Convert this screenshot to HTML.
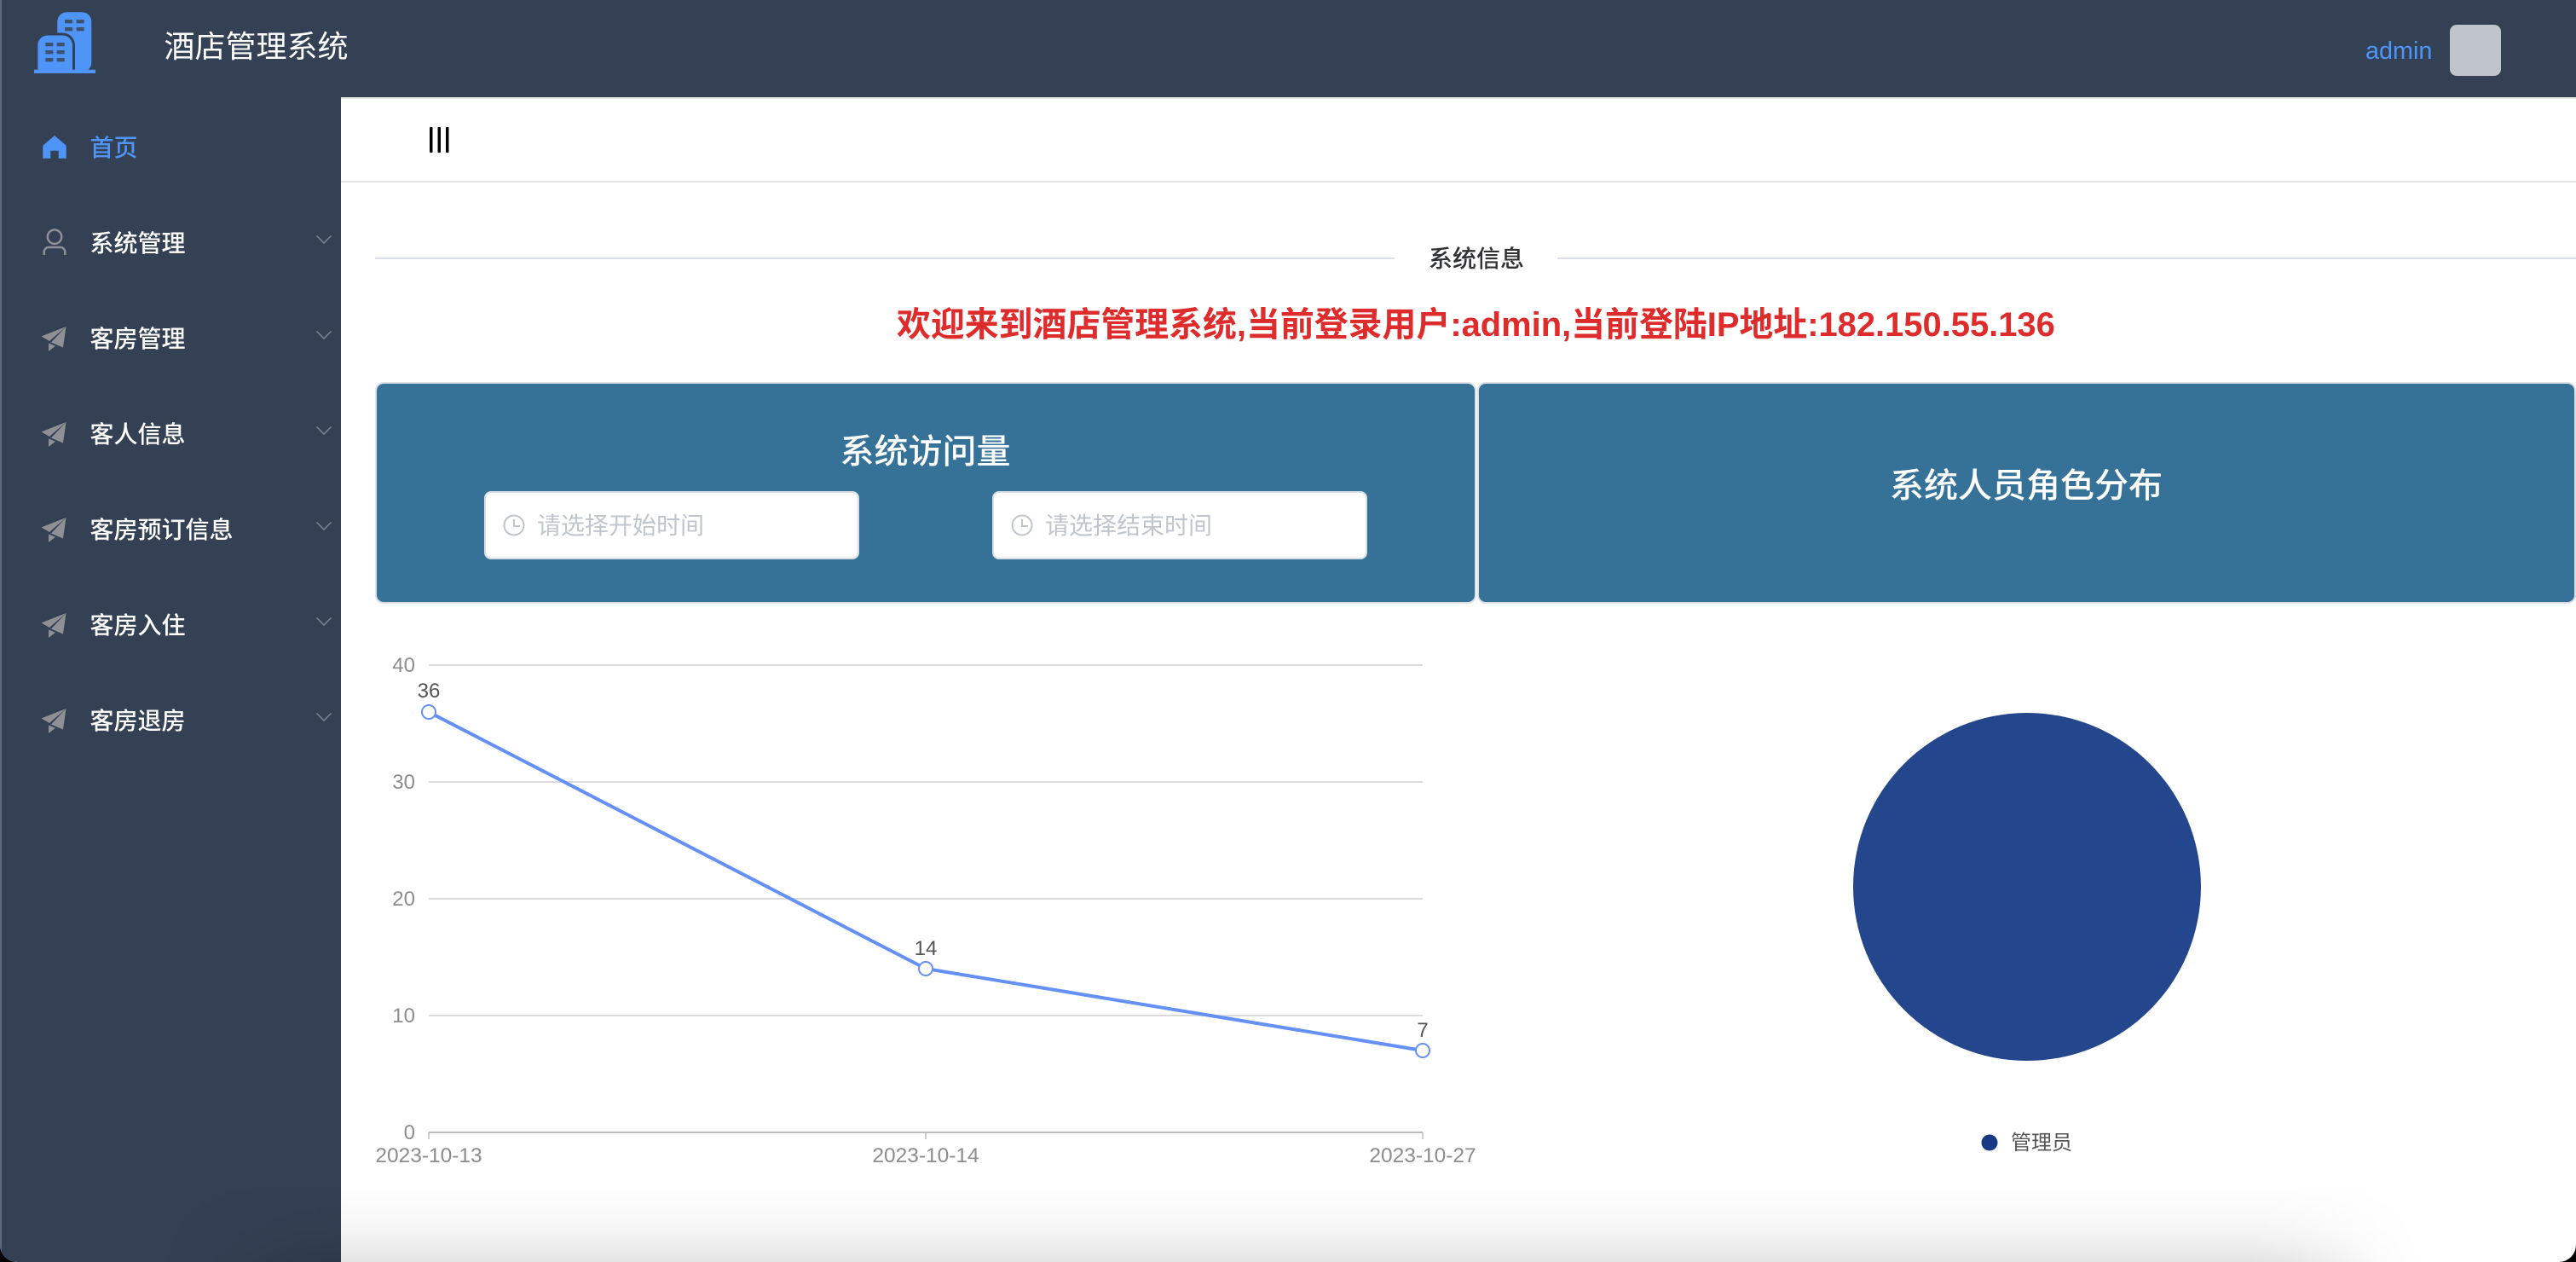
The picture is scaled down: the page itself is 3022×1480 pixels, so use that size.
<!DOCTYPE html>
<html lang="zh">
<head>
<meta charset="utf-8">
<title>酒店管理系统</title>
<style>
html,body{margin:0;padding:0;width:3022px;height:1480px;overflow:hidden;background:#000}
body{font-family:"Liberation Sans","Noto Sans CJK SC",sans-serif}
#win{position:absolute;left:0;top:0;width:3022px;height:1480px;background:#fff;overflow:hidden;border-radius:0 0 20px 20px}
.a{position:absolute;white-space:nowrap}
#hd{left:0;top:0;width:3022px;height:114px;background:#344154}
#sd{left:0;top:114px;width:400px;height:1366px;background:#344154}
#edge{left:0;top:0;width:2px;height:1480px;background:#5c6880;border-radius:0 0 0 20px}
.m{left:105.5px;font-size:28px;line-height:40px;height:40px;color:#fff;font-weight:500}
.card{background:#367298;border:2px solid #dcdfe6;border-radius:10px;box-sizing:border-box}
.ct{color:#fff;font-size:40px;line-height:56px;font-weight:500;text-align:center}
.inp{width:440px;height:80px;box-sizing:border-box;background:#fff;border:2px solid #dcdfe6;border-radius:8px}
.ph{font-size:28px;line-height:40px;color:#c0c4cc}
svg{position:absolute;left:0;top:0}
#shade{left:190px;top:1390px;width:2650px;height:90px;
  background:linear-gradient(to bottom,rgba(0,0,0,0) 0,rgba(0,0,0,.007) 11%,rgba(0,0,0,.018) 33%,rgba(0,0,0,.037) 55%,rgba(0,0,0,.068) 78%,rgba(0,0,0,.11) 100%);
  -webkit-mask-image:linear-gradient(to right,transparent 0,rgba(0,0,0,.16) 60px,rgba(0,0,0,.5) 110px,rgba(0,0,0,.84) 160px,#000 215px,#000 2450px,rgba(0,0,0,.84) 2500px,rgba(0,0,0,.5) 2550px,rgba(0,0,0,.16) 2600px,transparent 100%);
  mask-image:linear-gradient(to right,transparent 0,rgba(0,0,0,.16) 60px,rgba(0,0,0,.5) 110px,rgba(0,0,0,.84) 160px,#000 215px,#000 2450px,rgba(0,0,0,.84) 2500px,rgba(0,0,0,.5) 2550px,rgba(0,0,0,.16) 2600px,transparent 100%)}
</style>
</head>
<body>
<div id="win">
  <div class="a" id="hd"></div>
  <div class="a" id="sd"></div>
  <div class="a" style="left:400px;top:114px;width:2622px;height:2px;background:#e6e6e6"></div>
  <div class="a" style="left:400px;top:212px;width:2622px;height:2px;background:#e6e6e6"></div>

  <div class="a" style="left:192.500px;top:30px;font-size:36px;line-height:50px;color:#fff">酒店管理系统</div>
  <div class="a" style="left:2775px;top:42px;font-size:28.8px;line-height:36px;color:#4f94f7">admin</div>
  <div class="a" style="left:2874px;top:29px;width:60px;height:60px;border-radius:8px;background:#c0c4cc"></div>

  <div class="a m" style="top:154px;color:#4f94f7">首页</div>
  <div class="a m" style="top:266px">系统管理</div>
  <div class="a m" style="top:378px">客房管理</div>
  <div class="a m" style="top:490px">客人信息</div>
  <div class="a m" style="top:602px">客房预订信息</div>
  <div class="a m" style="top:714px">客房入住</div>
  <div class="a m" style="top:826px">客房退房</div>

  <div class="a" style="left:440px;top:302px;width:1196px;height:2px;background:#dcdfe6"></div>
  <div class="a" style="left:1827px;top:302px;width:1195px;height:2px;background:#dcdfe6"></div>
  <div class="a" style="left:1676px;top:283.500px;font-size:28px;line-height:40px;color:#303133;font-weight:500">系统信息</div>

  <div class="a" style="left:1052px;top:353px;font-size:39.9px;line-height:56px;color:#de2c2c;font-weight:700">欢迎来到酒店管理系统,当前登录用户:admin,当前登陆IP地址:182.150.55.136</div>

  <div class="a card" style="left:440px;top:448px;width:1291.500px;height:260px"></div>
  <div class="a card" style="left:1732.500px;top:448px;width:1289.500px;height:260px"></div>
  <div class="a ct" style="left:441px;top:501.500px;width:1289px">系统访问量</div>
  <div class="a ct" style="left:1734px;top:541.500px;width:1286px">系统人员角色分布</div>

  <div class="a inp" style="left:568px;top:576px"></div>
  <div class="a inp" style="left:1164px;top:576px"></div>
  <div class="a ph" style="left:630px;top:596.500px">请选择开始时间</div>
  <div class="a ph" style="left:1226px;top:596.500px">请选择结束时间</div>

  <svg width="3022" height="1480" viewBox="0 0 3022 1480" xmlns="http://www.w3.org/2000/svg">
    <defs>
      <g id="pl" fill="#8e9096">
        <path d="M77.500 383L48.500 394.500L58 400z"/>
        <path d="M77.500 383L60 401.500L74 407.500z"/>
        <path d="M57 402.500V412L65 405.700z"/>
      </g>
      <path id="chev" d="M371.500 276.500L380 285L388.500 276.500" fill="none" stroke="#7f8794" stroke-width="1.500"/>
    </defs>

    <!-- logo -->
    <rect x="67.300" y="14.300" width="40" height="70" rx="11" fill="#4f94f7"/>
    <path d="M41.300 84V53a14.500 14.500 0 0 1 14.500-14.500H73.500A14.500 14.500 0 0 1 88 53V84z" fill="#344154"/>
    <path d="M44.300 84V53a11.500 11.500 0 0 1 11.500-11.500H73.500A11.500 11.500 0 0 1 85 53V84z" fill="#4f94f7"/>
    <rect x="40" y="81.700" width="72" height="4.300" fill="#4f94f7"/>
    <g fill="#3d5170">
      <rect x="53.300" y="50" width="9" height="4.300"/><rect x="66.700" y="50" width="9" height="4.300"/>
      <rect x="53.300" y="59" width="9" height="4.300"/><rect x="66.700" y="59" width="9" height="4.300"/>
      <rect x="53.300" y="68" width="9" height="4.300"/><rect x="66.700" y="68" width="9" height="4.300"/>
      <rect x="76" y="23" width="9" height="4.300"/><rect x="89.700" y="23" width="9" height="4.300"/>
      <rect x="76" y="32" width="9" height="4.300"/><rect x="89.700" y="32" width="9" height="4.300"/>
    </g>

    <!-- home -->
    <path fill="#4f94f7" d="M64 159L77.700 170.700V185.700H68.700V176.700H59.300V185.700H50.300V170.700z"/>
    <!-- user -->
    <g fill="none" stroke="#8e9096" stroke-width="2.500">
      <circle cx="64" cy="277.700" r="8.200"/>
      <path d="M51.700 299v-3.500a5.500 5.500 0 0 1 5.500-5.500h13.600a5.500 5.500 0 0 1 5.500 5.500v3.500"/>
    </g>
    <!-- planes -->
    <use href="#pl"/>
    <use href="#pl" y="112"/>
    <use href="#pl" y="224"/>
    <use href="#pl" y="336"/>
    <use href="#pl" y="448"/>
    <use href="#chev"/>
    <use href="#chev" y="112"/>
    <use href="#chev" y="224"/>
    <use href="#chev" y="336"/>
    <use href="#chev" y="448"/>
    <use href="#chev" y="560"/>

    <!-- collapse -->
    <g fill="#000">
      <rect x="504" y="149" width="3.500" height="30" rx="1"/>
      <rect x="513.500" y="149" width="3.500" height="30" rx="1"/>
      <rect x="523" y="149" width="3.500" height="30" rx="1"/>
    </g>

    <!-- clocks -->
    <g fill="none" stroke="#c0c4cc" stroke-width="2">
      <circle cx="603" cy="616" r="11.500"/><path d="M603 609v8h7"/>
      <circle cx="1199" cy="616" r="11.500"/><path d="M1199 609v8h7"/>
    </g>

    <!-- chart -->
    <g stroke="#dcdcdc" stroke-width="2">
      <path d="M503 780H1669M503 917H1669M503 1054H1669M503 1191H1669"/>
    </g>
    <g stroke="#bdbdbd" fill="none">
      <path d="M503 1328H1669" stroke-width="2"/>
      <path d="M503 1328V1336M1086 1328V1336M1669 1328V1336" stroke-width="1.500"/>
    </g>
    <g font-family="'Liberation Sans',sans-serif" font-size="24" fill="#8c8c8c" text-anchor="end">
      <text x="487" y="788">40</text>
      <text x="487" y="925">30</text>
      <text x="487" y="1062">20</text>
      <text x="487" y="1199">10</text>
      <text x="487" y="1336">0</text>
    </g>
    <g font-family="'Liberation Sans',sans-serif" font-size="24.500" fill="#8c8c8c" text-anchor="middle">
      <text x="503" y="1363">2023-10-13</text>
      <text x="1086" y="1363">2023-10-14</text>
      <text x="1669" y="1363">2023-10-27</text>
    </g>
    <polyline points="503,835 1086,1136 1669,1232" fill="none" stroke="#6590f5" stroke-width="4"/>
    <g fill="#fff" stroke="#6590f5" stroke-width="2">
      <circle cx="503" cy="835" r="8"/>
      <circle cx="1086" cy="1136" r="8"/>
      <circle cx="1669" cy="1232" r="8"/>
    </g>
    <g font-family="'Liberation Sans',sans-serif" font-size="24" fill="#555" text-anchor="middle">
      <text x="503" y="818">36</text>
      <text x="1086" y="1120">14</text>
      <text x="1669" y="1216">7</text>
    </g>

    <!-- pie -->
    <circle cx="2378" cy="1040" r="204" fill="#24468c"/>
    <circle cx="2334" cy="1340" r="9.500" fill="#183a84"/>
    <text x="2359" y="1348" font-family="'Liberation Sans','Noto Sans CJK SC',sans-serif" font-size="24" fill="#555">管理员</text>
  </svg>

  <div class="a" id="shade"></div>
  <div class="a" id="edge"></div>
</div>
</body>
</html>
